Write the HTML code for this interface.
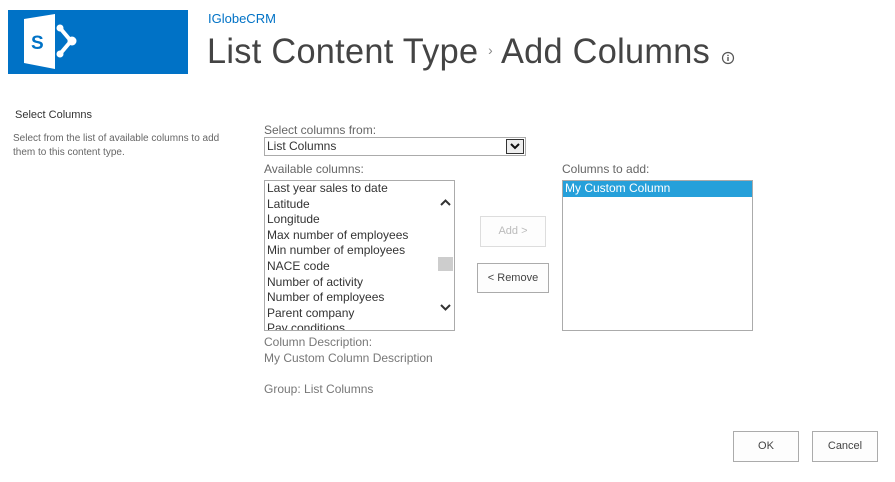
<!DOCTYPE html>
<html><head><style>
body{margin:0;width:895px;height:482px;background:#fff;font-family:"Liberation Sans",sans-serif;position:relative;overflow:hidden;color:#444}
.a{position:absolute;white-space:nowrap}
.lb{border:1px solid #ababab;position:absolute;background:#fff;overflow:hidden}
.row{height:15.6px;line-height:15.6px;font-size:12px;color:#333;padding-left:2px}
.btn{position:absolute;border:1px solid #ababab;background:#fdfdfd;font-size:11px;text-align:center;color:#444;box-sizing:border-box}
</style></head><body>
<div class="a" style="left:8px;top:10px;width:180px;height:64px;background:#0072c6"></div>
<svg class="a" style="left:22px;top:13px" width="60" height="58" viewBox="0 0 60 58">
<polygon points="2,6 33,1 33,56 2,50" fill="#fff"/>
<text x="9" y="36" font-family="Liberation Sans" font-weight="bold" font-size="19" fill="#0072c6">S</text>
<path d="M38 15 L49 28 L38 41" stroke="#fff" stroke-width="4" fill="none"/>
<circle cx="38" cy="15" r="3.5" fill="#fff"/><circle cx="50" cy="28" r="4.5" fill="#fff"/><circle cx="38" cy="41" r="3.5" fill="#fff"/>
</svg>
<div class="a" style="left:208px;top:11px;font-size:13px;color:#0072c6">IGlobeCRM</div>
<div class="a" style="left:207px;top:32px;font-size:35px;color:#444;letter-spacing:0.3px;transform:scaleX(0.98);transform-origin:left">List Content Type <span style="font-size:14px;color:#888;vertical-align:middle;position:relative;top:-4px">›</span> Add Columns</div>
<svg class="a" style="left:721px;top:51px" width="14" height="14"><circle cx="7" cy="7" r="5.5" fill="none" stroke="#555" stroke-width="1.2"/><rect x="6.3" y="6" width="1.4" height="4" fill="#555"/><rect x="6.3" y="3.8" width="1.4" height="1.3" fill="#555"/></svg>
<div class="a" style="left:15px;top:109px;font-size:11px;color:#333">Select Columns</div>
<div class="a" style="left:13px;top:132px;font-size:10px;color:#666;line-height:14px">Select from the list of available columns to add<br>them to this content type.</div>
<div class="a" style="left:264px;top:123px;font-size:12px;color:#666">Select columns from:</div>
<div class="lb" style="left:264px;top:137px;width:260px;height:17px"><div class="row" style="line-height:17px">List Columns</div>
<svg style="position:absolute;right:1px;top:1px;border:1px solid #333;background:#eee" width="16" height="13"><path d="M4 4 L8 8 L12 4" stroke="#111" stroke-width="2" fill="none"/></svg></div>
<div class="a" style="left:264px;top:162px;font-size:12px;color:#666">Available columns:</div>
<div class="lb" style="left:264px;top:180px;width:189px;height:149px">
<div class="row">Last year sales to date</div><div class="row">Latitude</div><div class="row">Longitude</div><div class="row">Max number of employees</div><div class="row">Min number of employees</div><div class="row">NACE code</div><div class="row">Number of activity</div><div class="row">Number of employees</div><div class="row">Parent company</div><div class="row">Pay conditions</div>
<div style="position:absolute;right:0;top:0;width:17px;height:149px;background:#fff"></div>
<div style="position:absolute;right:1px;top:76px;width:15px;height:14px;background:#cdcdcd"></div>
<svg style="position:absolute;right:1px;top:16px" width="15" height="12"><path d="M3 8 L7.5 3.5 L12 8" stroke="#333" stroke-width="2" fill="none"/></svg>
<svg style="position:absolute;right:1px;top:120px" width="15" height="12"><path d="M3 4 L7.5 8.5 L12 4" stroke="#333" stroke-width="2" fill="none"/></svg>
</div>
<div class="btn" style="left:480px;top:216px;width:66px;height:31px;line-height:29px;color:#bbb;border-color:#ddd">Add &gt;</div>
<div class="btn" style="left:477px;top:263px;width:72px;height:30px;line-height:28px">&lt; Remove</div>
<div class="a" style="left:562px;top:162px;font-size:12px;color:#666">Columns to add:</div>
<div class="lb" style="left:562px;top:180px;width:189px;height:149px"><div class="row" style="background:#26a0da;color:#fff">My Custom Column</div></div>
<div class="a" style="left:264px;top:334px;font-size:12px;color:#777;line-height:16px">Column Description:<br>My Custom Column Description</div>
<div class="a" style="left:264px;top:382px;font-size:12px;color:#777">Group: List Columns</div>
<div class="btn" style="left:733px;top:431px;width:66px;height:31px;line-height:29px">OK</div>
<div class="btn" style="left:812px;top:431px;width:66px;height:31px;line-height:29px">Cancel</div>
</body></html>
